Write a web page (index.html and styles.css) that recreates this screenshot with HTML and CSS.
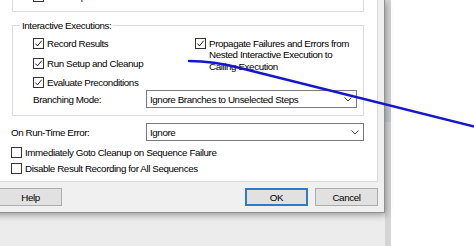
FILE: index.html
```html
<!DOCTYPE html>
<html lang="en">
<head>
  <meta charset="UTF-8">
  <title>Station Options</title>
  <link rel="stylesheet" href="styles.css">
</head>
<body>
  <div class="desk">
    <div class="window">
      <div class="stage">
        <div class="dialog">
          <div class="panel">
            <div class="group group-prev">
              <label class="check"><span class="box on"><svg viewBox="0 0 9 9"><path d="M1.4 4.6 L3.5 6.9 L7.7 1.7"/></svg></span>Use Loop</label>
            </div>

            <div class="group group-exec">
              <div class="group-title">Interactive Executions:</div>
              <div class="exec-grid">
                <div class="exec-left">
                  <label class="check"><span class="box on"><svg viewBox="0 0 9 9"><path d="M1.4 4.6 L3.5 6.9 L7.7 1.7"/></svg></span>Record Results</label>
                  <label class="check"><span class="box on"><svg viewBox="0 0 9 9"><path d="M1.4 4.6 L3.5 6.9 L7.7 1.7"/></svg></span>Run Setup and Cleanup</label>
                  <label class="check"><span class="box on"><svg viewBox="0 0 9 9"><path d="M1.4 4.6 L3.5 6.9 L7.7 1.7"/></svg></span>Evaluate Preconditions</label>
                </div>
                <label class="check check-wrap"><span class="box on"><svg viewBox="0 0 9 9"><path d="M1.4 4.6 L3.5 6.9 L7.7 1.7"/></svg></span><span class="wrap-text">Propagate Failures and Errors from Nested Interactive Execution to Calling Execution</span></label>
              </div>
              <div class="field-row branch-row">
                <span class="field-label">Branching Mode:</span>
                <div class="select select-branch">
                  <span>Ignore Branches to Unselected Steps</span>
                  <svg class="chev" viewBox="0 0 8 5"><path d="M0.5 0.5 L4 4 L7.5 0.5"/></svg>
                </div>
              </div>
            </div>

            <div class="field-row error-row">
              <span class="field-label">On Run-Time Error:</span>
              <div class="select select-error">
                <span>Ignore</span>
                <svg class="chev" viewBox="0 0 8 5"><path d="M0.5 0.5 L4 4 L7.5 0.5"/></svg>
              </div>
            </div>

            <div class="checks">
              <label class="check"><span class="box"></span>Immediately Goto Cleanup on Sequence Failure</label>
              <label class="check"><span class="box"></span>Disable Result Recording for All Sequences</label>
            </div>
          </div>

          <div class="buttons">
            <button class="btn">Help</button>
            <div class="btn-group">
              <button class="btn btn-default">OK</button>
              <button class="btn">Cancel</button>
            </div>
          </div>
        </div>
        <div class="below">
          <div class="below-text">Test sequence file is loaded</div>
        </div>
      </div>
      <div class="rail"><div class="thumb"></div></div>
    </div>

    <svg class="ink" viewBox="0 0 474 246">
      <path d="M189 61 C 205 61, 221 63, 240 68 L 476 127"/>
    </svg>
  </div>
</body>
</html>
```

FILE: styles.css
```css
* {
  margin: 0;
  padding: 0;
  box-sizing: border-box;
}
body {
  width: 474px;
  height: 246px;
  overflow: hidden;
  background: #fff;
  font-family: "Liberation Sans", Arial, sans-serif;
  font-size: 9.8px;
  letter-spacing: -0.4px;
  color: #000;
}
.desk {
  position: relative;
  width: 474px;
  height: 246px;
}
.window {
  display: flex;
  width: 391px;
  height: 246px;
  background: #ececec;
}
.stage {
  width: 385px;
  display: flex;
  flex-direction: column;
}
.rail {
  width: 6px;
  background: #d5d5d5;
}
.thumb {
  margin-top: 108px;
  height: 14px;
  background: #c4cad2;
}

/* dialog */
.dialog {
  width: 393px;
  margin-left: -8px;
  background: #f0f0f0;
  border-right: 1px solid #8f8f8f;
  border-bottom: 1px solid #8f8f8f;
  padding: 0 6px 6px 7px;
  box-shadow: 1px 2px 7px rgba(0, 0, 0, 0.35);
  position: relative;
  z-index: 1;
}
.panel {
  display: flex;
  flex-direction: column;
  background: #fff;
  border: 1px solid #dadada;
  border-top: none;
  padding: 0 13px 6px 12px;
}

.group {
  border: 1px solid #dadada;
}
.group-prev {
  margin-top: -20px;
  height: 32px;
  border-top: none;
  display: flex;
  flex-direction: column;
  justify-content: flex-end;
  padding: 0 0 8px 20px;
}
.group-exec {
  margin-top: 13px;
  padding: 0 6px 7px 20px;
}
.group-title {
  width: fit-content;
  margin: -7px 0 0 -13px;
  padding: 0 2px;
  background: #fff;
  line-height: 13px;
}

.check {
  display: flex;
  align-items: center;
  gap: 3px;
  height: 13px;
  line-height: 13px;
  white-space: nowrap;
}
.box {
  width: 11px;
  height: 11px;
  flex: none;
  border: 1px solid #333;
  background: #fff;
  display: flex;
  align-items: center;
  justify-content: center;
}
.box svg {
  width: 9px;
  height: 9px;
}
.box path {
  fill: none;
  stroke: #222;
  stroke-width: 1;
}

.exec-grid {
  display: flex;
  margin-top: 5px;
}
.exec-left {
  width: 162px;
  display: flex;
  flex-direction: column;
  gap: 6.5px;
}
.check-wrap {
  align-items: flex-start;
  height: auto;
  white-space: normal;
}
.check-wrap .box {
  margin-top: 1px;
}
.wrap-text {
  width: 148px;
  line-height: 11.5px;
  margin-top: 0.5px;
}

.field-row {
  display: flex;
  align-items: center;
}
.branch-row {
  margin-top: 1px;
}
.field-label {
  width: 113px;
  flex: none;
}
.error-row {
  margin-top: 7px;
  margin-left: -1px;
}
.error-row .field-label {
  width: 135px;
}
.select {
  height: 18px;
  border: 1px solid #7a7a7a;
  background: #fff;
  display: flex;
  align-items: center;
  justify-content: space-between;
  padding: 0 4px 0 3px;
}
.select-branch {
  width: 212px;
}
.select-error {
  width: 219px;
}
.chev {
  width: 8px;
  height: 5px;
}
.chev path {
  fill: none;
  stroke: #444;
  stroke-width: 1;
}

.checks {
  margin-top: 5px;
  margin-left: -1px;
  display: flex;
  flex-direction: column;
  gap: 3px;
}

/* buttons */
.buttons {
  display: flex;
  justify-content: space-between;
  margin-top: 6px;
}
.btn-group {
  display: flex;
  gap: 7px;
}
.btn {
  width: 63px;
  height: 18px;
  font: inherit;
  letter-spacing: inherit;
  color: #000;
  background: #e1e1e1;
  border: 1px solid #adadad;
}
.btn-default {
  border: 2px solid #2f7bc9;
}

.below {
  flex: 1;
  display: flex;
  flex-direction: column;
  justify-content: flex-end;
  padding-left: 240px;
}
.below-text {
  font-size: 12px;
  line-height: 12px;
  white-space: nowrap;
  margin-bottom: -11px;
  color: #222;
}

/* pen stroke drawn over the screenshot */
.ink {
  position: absolute;
  top: 0;
  left: 0;
  width: 474px;
  height: 246px;
  z-index: 5;
}
.ink path {
  fill: none;
  stroke: #1616cc;
  stroke-width: 2.4;
  stroke-linecap: round;
}
```
